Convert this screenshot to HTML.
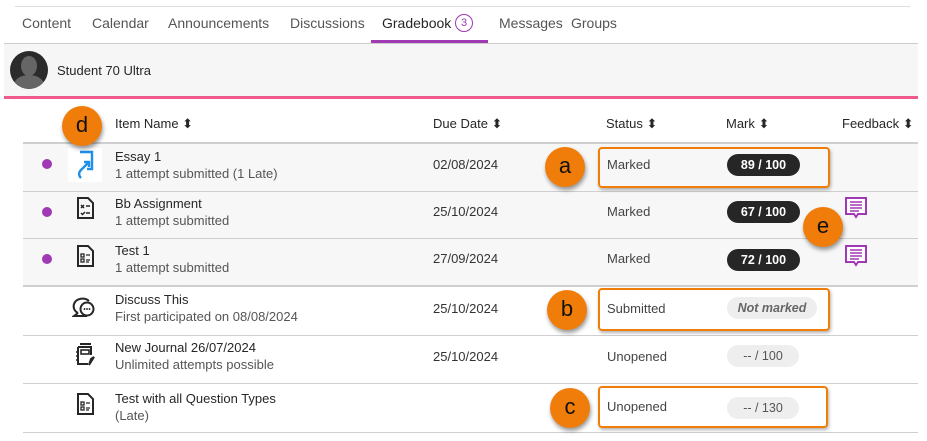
<!DOCTYPE html>
<html><head><style>
*{margin:0;padding:0;box-sizing:border-box}
body{width:927px;height:441px;background:#fff;font-family:"Liberation Sans",sans-serif;color:#333;position:relative;overflow:hidden}
.a{position:absolute;white-space:nowrap}
.tab{position:absolute;top:15px;font-size:14px;color:#555}
.hd{position:absolute;top:116px;font-size:13px;color:#262626}
.t1{font-size:13px;color:#262626}
.t2{font-size:13px;color:#555;margin-top:2px}
.dt{position:absolute;font-size:13px;color:#333;left:433px}
.st{position:absolute;font-size:13px;color:#444;left:607px}
.pill{position:absolute;height:22px;border-radius:11px;font-size:12.5px;text-align:center;line-height:22px}
.dk{background:#262626;color:#fff;font-weight:bold;left:727px;width:73px}
.lt{background:#eee;color:#555;left:727px;width:72px}
.sep{position:absolute;left:23px;width:895px;height:1px;background:#cfcfcf}
.dot{position:absolute;left:42px;width:10px;height:10px;border-radius:50%;background:#a03ab4}
.oc{position:absolute;width:40px;height:40px;border-radius:50%;background:#f07d0a;color:#111;font-size:22px;text-align:center;line-height:38px;box-shadow:1px 3px 4px rgba(0,0,0,.4)}
.ob{position:absolute;border:2.5px solid #f07d0a;border-radius:4px;box-shadow:1px 2px 3px rgba(0,0,0,.3)}
.fb{position:absolute;left:845px}
</style></head><body>
<div class="a" style="left:15px;top:6px;width:895px;height:1px;background:#ddd"></div>
<div class="tab" style="left:22px">Content</div>
<div class="tab" style="left:92px">Calendar</div>
<div class="tab" style="left:168px">Announcements</div>
<div class="tab" style="left:290px">Discussions</div>
<div class="tab" style="left:382px;color:#262626">Gradebook</div>
<div class="a" style="left:455px;top:14px;width:18px;height:18px;border:1px solid #a03ab4;border-radius:50%;font-size:11px;text-align:center;line-height:16px;color:#a03ab4">3</div>
<div class="tab" style="left:499px">Messages</div>
<div class="tab" style="left:571px">Groups</div>
<div class="a" style="left:371px;top:40px;width:117px;height:3px;background:#a03ab4"></div>
<div class="a" style="left:4px;top:43px;width:914px;height:1px;background:#ccc"></div>
<div class="a" style="left:4px;top:44px;width:914px;height:52px;background:#f6f6f6"></div>
<div class="a" style="left:10px;top:51px;width:38px;height:38px;border-radius:50%;background:#2b2b2b;overflow:hidden">
<div style="position:absolute;left:11px;top:5px;width:16px;height:20px;border-radius:50%;background:#666"></div>
<div style="position:absolute;left:4px;top:24px;width:30px;height:20px;border-radius:50% 50% 0 0;background:#666"></div></div>
<div class="a" style="left:57px;top:63px;font-size:13px;color:#262626">Student 70 Ultra</div>
<div class="a" style="left:4px;top:96px;width:914px;height:3px;background:#f05a8c"></div>

<div class="hd" style="left:115px">Item Name ⬍</div>
<div class="hd" style="left:433px">Due Date ⬍</div>
<div class="hd" style="left:606px">Status ⬍</div>
<div class="hd" style="left:726px">Mark ⬍</div>
<div class="hd" style="left:842px">Feedback ⬍</div>

<div class="a" style="left:23px;top:143px;width:895px;height:143px;background:#f7f7f7"></div>
<div class="sep" style="top:142px;height:2px"></div>
<div class="sep" style="top:191px"></div>
<div class="sep" style="top:238px"></div>
<div class="sep" style="top:285px;height:2px"></div>
<div class="sep" style="top:335px"></div>
<div class="sep" style="top:383px"></div>
<div class="sep" style="top:432px"></div>

<!-- row1 -->
<div class="dot" style="top:159px"></div>
<div class="a" style="left:68px;top:148px;width:34px;height:34px;background:#fff"></div>
<svg class="a" style="left:75px;top:150px" width="22" height="30" viewBox="0 0 22 30"><path d="M5 2H17V19H12" fill="none" stroke="#1e90e8" stroke-width="2.4"/><path d="M9 12H14V17" fill="none" stroke="#1e90e8" stroke-width="2.4"/><path d="M14 12L6 20C3 23 4 26 6 28" fill="none" stroke="#1e90e8" stroke-width="2.4"/></svg>
<div class="a" style="left:115px;top:149px"><div class="t1">Essay 1</div><div class="t2">1 attempt submitted (1 Late)</div></div>
<div class="dt" style="top:157px">02/08/2024</div>
<div class="st" style="top:157px">Marked</div>
<div class="pill dk" style="top:154px">89 / 100</div>

<!-- row2 -->
<div class="dot" style="top:207px"></div>
<svg class="a" style="left:76px;top:197px" width="18" height="22" viewBox="0 0 18 22"><path d="M2 1H12L17 6V21H2Z" fill="none" stroke="#262626" stroke-width="2"/><path d="M5 8L8 11M8 8L5 11M10 9H14M5 16L6.5 17.5L9 15M10 16H14" stroke="#262626" stroke-width="1.5" fill="none"/></svg>
<div class="a" style="left:115px;top:196px"><div class="t1">Bb Assignment</div><div class="t2">1 attempt submitted</div></div>
<div class="dt" style="top:204px">25/10/2024</div>
<div class="st" style="top:204px">Marked</div>
<div class="pill dk" style="top:201px">67 / 100</div>
<svg class="fb" style="top:197px" width="22" height="22" viewBox="0 0 22 22"><path d="M1 1H21V17H13L11 20L9 17H1Z" fill="#fff" stroke="#a03ab4" stroke-width="2"/><path d="M5 5H17M5 8H17M5 11H17M5 14H14" stroke="#a03ab4" stroke-width="1.5"/></svg>

<!-- row3 -->
<div class="dot" style="top:254px"></div>
<svg class="a" style="left:76px;top:245px" width="18" height="22" viewBox="0 0 18 22"><path d="M2 1H12L17 6V21H2Z" fill="none" stroke="#262626" stroke-width="2"/><rect x="5" y="9" width="3" height="3" fill="none" stroke="#262626" stroke-width="1.3"/><rect x="5" y="14" width="3" height="3" fill="none" stroke="#262626" stroke-width="1.3"/><path d="M10 10H14M10 15H14M10 17H13" stroke="#262626" stroke-width="1.3"/></svg>
<div class="a" style="left:115px;top:243px"><div class="t1">Test 1</div><div class="t2">1 attempt submitted</div></div>
<div class="dt" style="top:251px">27/09/2024</div>
<div class="st" style="top:251px">Marked</div>
<div class="pill dk" style="top:249px">72 / 100</div>
<svg class="fb" style="top:245px" width="22" height="22" viewBox="0 0 22 22"><path d="M1 1H21V17H13L11 20L9 17H1Z" fill="#fff" stroke="#a03ab4" stroke-width="2"/><path d="M5 5H17M5 8H17M5 11H17M5 14H14" stroke="#a03ab4" stroke-width="1.5"/></svg>

<!-- row4 -->
<svg class="a" style="left:72px;top:296px" width="24" height="22" viewBox="0 0 24 22"><path d="M6 17C2 15 1 11 2 8C4 2 13 1 17 5" fill="none" stroke="#262626" stroke-width="2"/><circle cx="15" cy="13" r="6.5" fill="none" stroke="#262626" stroke-width="2"/><path d="M6 17L2 20H15" fill="none" stroke="#262626" stroke-width="2"/><circle cx="12.5" cy="13" r=".9"/><circle cx="15" cy="13" r=".9"/><circle cx="17.5" cy="13" r=".9"/></svg>
<div class="a" style="left:115px;top:292px"><div class="t1">Discuss This</div><div class="t2">First participated on 08/08/2024</div></div>
<div class="dt" style="top:301px">25/10/2024</div>
<div class="st" style="top:301px">Submitted</div>
<div class="pill lt" style="top:297px;width:90px;font-style:italic;font-weight:bold;color:#666">Not marked</div>

<!-- row5 -->
<svg class="a" style="left:74px;top:343px" width="22" height="24" viewBox="0 0 22 24"><path d="M4 4V21H14M4 4H17V12" fill="none" stroke="#262626" stroke-width="2"/><path d="M6 1H17" stroke="#262626" stroke-width="2"/><rect x="7" y="7" width="8" height="4" fill="none" stroke="#262626" stroke-width="1.6"/><path d="M2 9H5M2 13H5M2 17H5" stroke="#262626" stroke-width="1.5"/><path d="M20 14L15 22L17 16Z" fill="#262626" stroke="#262626" stroke-width="2"/></svg>
<div class="a" style="left:115px;top:340px"><div class="t1">New Journal 26/07/2024</div><div class="t2">Unlimited attempts possible</div></div>
<div class="dt" style="top:349px">25/10/2024</div>
<div class="st" style="top:349px">Unopened</div>
<div class="pill lt" style="top:345px">-- / 100</div>

<!-- row6 -->
<svg class="a" style="left:76px;top:393px" width="18" height="22" viewBox="0 0 18 22"><path d="M2 1H12L17 6V21H2Z" fill="none" stroke="#262626" stroke-width="2"/><rect x="5" y="9" width="3" height="3" fill="none" stroke="#262626" stroke-width="1.3"/><rect x="5" y="14" width="3" height="3" fill="none" stroke="#262626" stroke-width="1.3"/><path d="M10 10H14M10 15H14M10 17H13" stroke="#262626" stroke-width="1.3"/></svg>
<div class="a" style="left:115px;top:391px"><div class="t1">Test with all Question Types</div><div class="t2">(Late)</div></div>
<div class="st" style="top:399px">Unopened</div>
<div class="pill lt" style="top:397px">-- / 130</div>

<!-- annotations -->
<div class="ob" style="left:598px;top:147px;width:232px;height:41px"></div>
<div class="ob" style="left:598px;top:288px;width:232px;height:43px"></div>
<div class="ob" style="left:598px;top:386px;width:230px;height:42px"></div>
<div class="oc" style="left:62px;top:106px">d</div>
<div class="oc" style="left:545px;top:147px">a</div>
<div class="oc" style="left:803px;top:207px">e</div>
<div class="oc" style="left:547px;top:290px">b</div>
<div class="oc" style="left:550px;top:388px">c</div>
</body></html>
